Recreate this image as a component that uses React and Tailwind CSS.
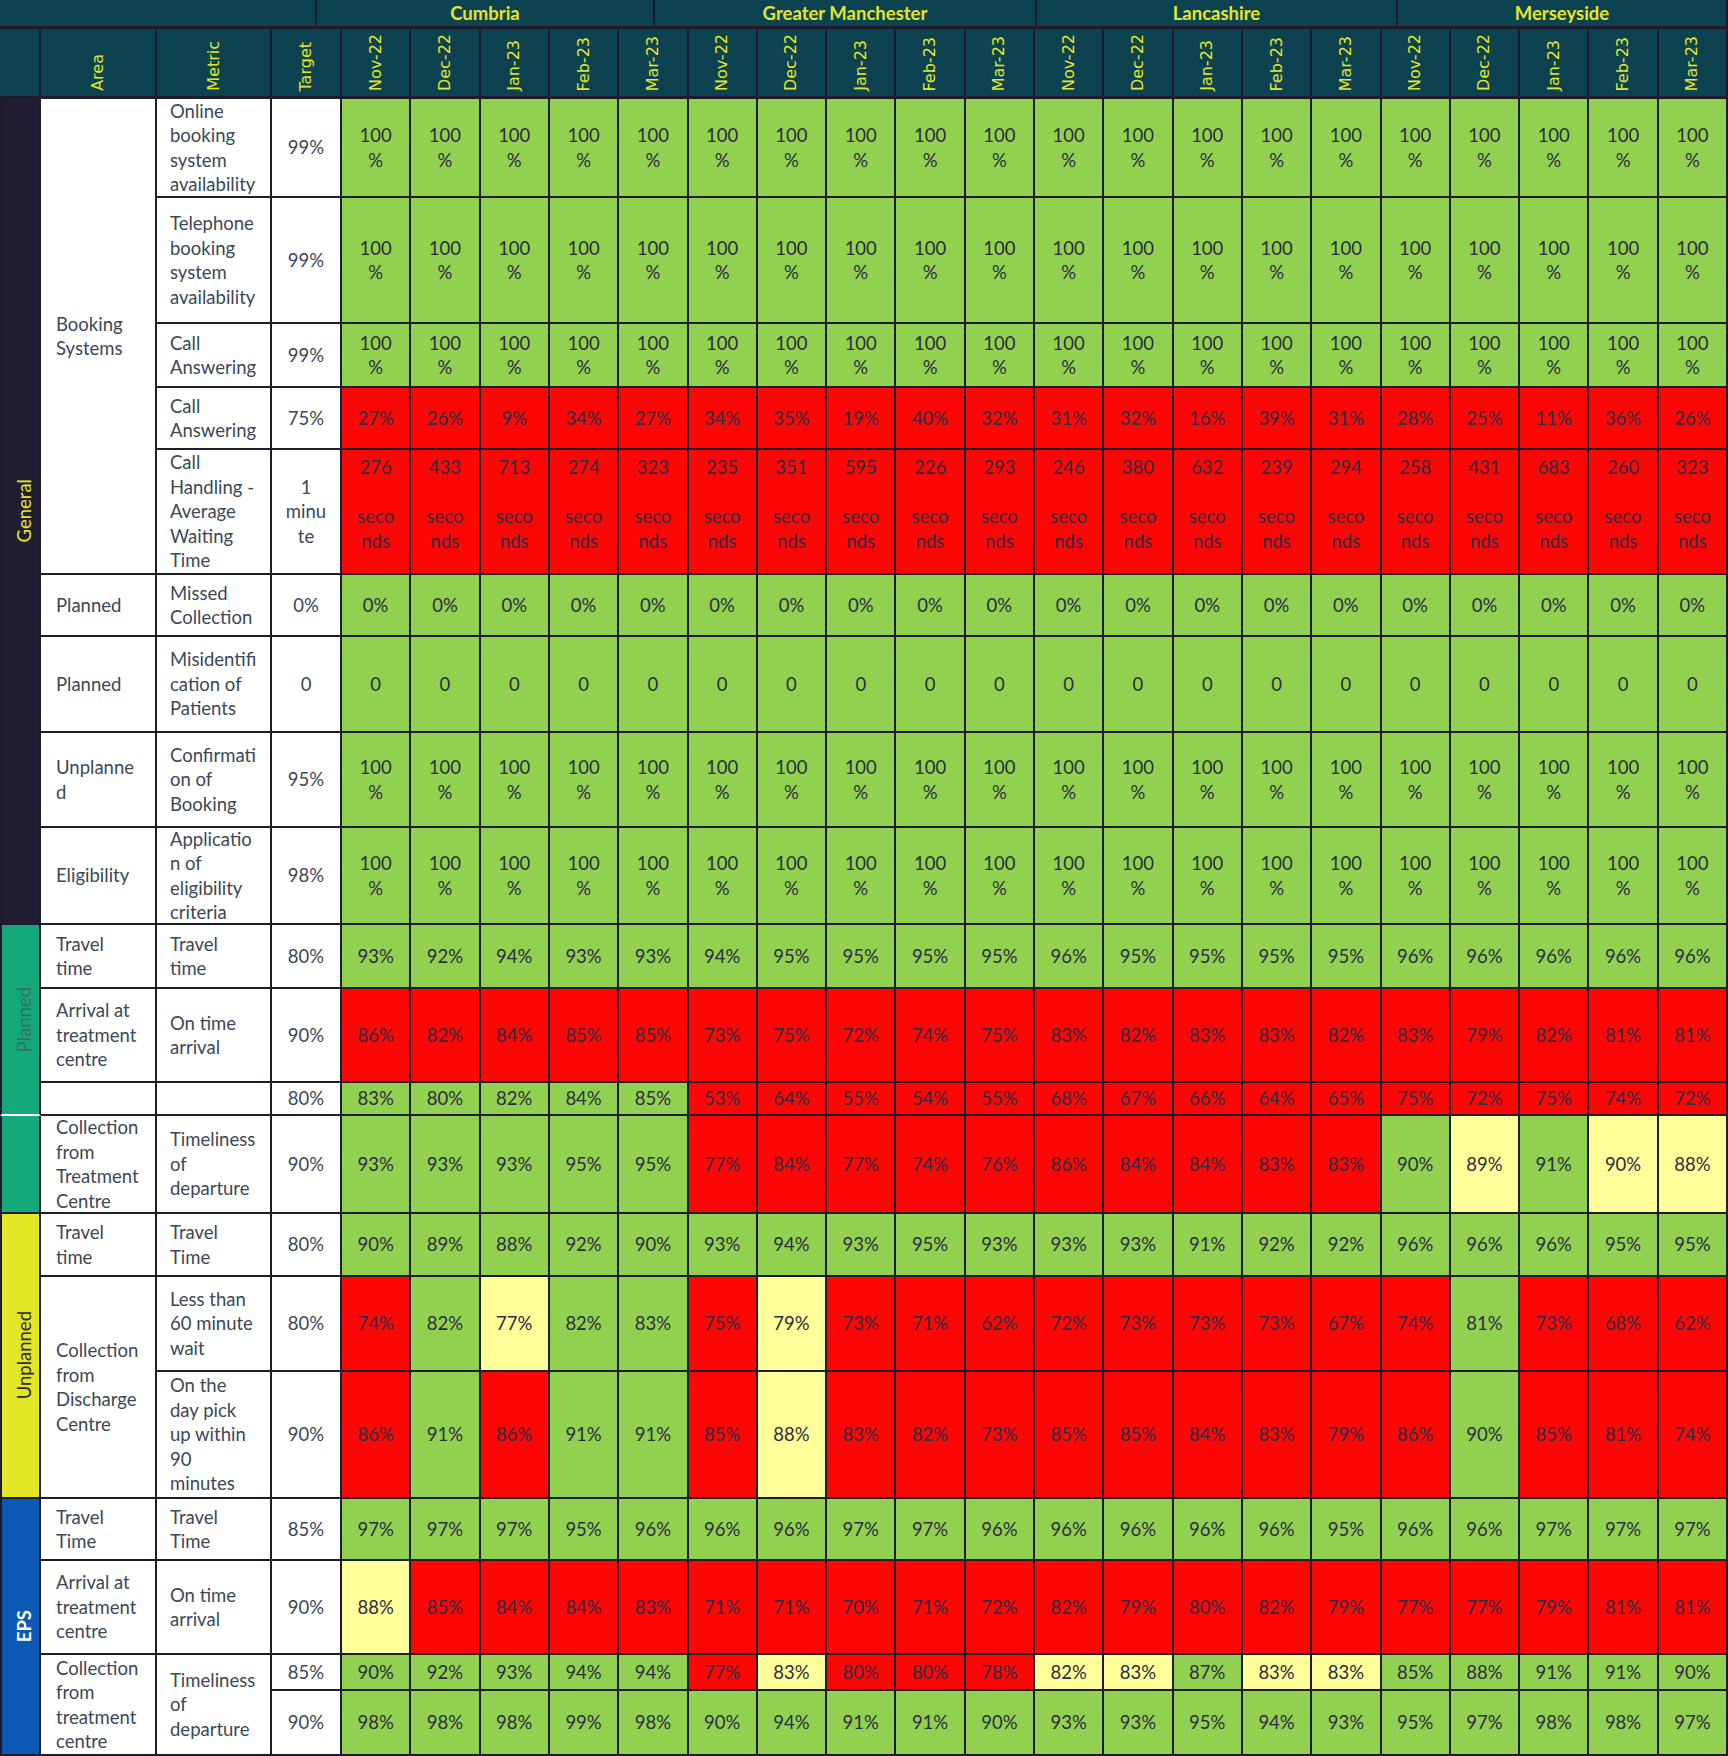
import React from 'react';

const LINE = 'border-[#1d1c2c]';
const fills = { g: 'bg-[#92d050]', r: 'bg-[#fd0606]', y: 'bg-[#ffff99]' };
const spans = { 1: '', 2: 'row-span-2', 3: 'row-span-3', 4: 'row-span-4', 5: 'row-span-5', 9: 'row-span-9' };

const regions = [
  { name: '', w: 'w-[317px]' },
  { name: 'Cumbria', w: 'w-[338px]' },
  { name: 'Greater Manchester', w: 'w-[382px]' },
  { name: 'Lancashire', w: 'w-[361px]' },
  { name: 'Merseyside', w: 'flex-1' },
];

const months = ['Nov-22', 'Dec-22', 'Jan-23', 'Feb-23', 'Mar-23'];

// helpers for the value rows
const pct = (s) => s.split(' ').map((n) => [n + '%']);
const secs = (s) => s.split(' ').map((n) => [n, '', 'seco', 'nds']);
const all = (lines) => Array(20).fill(lines);
const same = (c) => c.repeat(20);

const rows = [
  {
    band: { label: 'General', span: 9, cls: 'bg-[#211d33] text-[#e6e62a]' },
    area: { lines: ['Booking', 'Systems'], span: 5 },
    metric: { lines: ['Online', 'booking', 'system', 'availability'] },
    target: ['99%'], vals: all(['100', '%']), fill: same('g'),
  },
  { metric: { lines: ['Telephone', 'booking', 'system', 'availability'] }, target: ['99%'], vals: all(['100', '%']), fill: same('g') },
  { metric: { lines: ['Call', 'Answering'] }, target: ['99%'], vals: all(['100', '%']), fill: same('g') },
  {
    metric: { lines: ['Call', 'Answering'] }, target: ['75%'],
    vals: pct('27 26 9 34 27 34 35 19 40 32 31 32 16 39 31 28 25 11 36 26'), fill: same('r'),
  },
  {
    metric: { lines: ['Call', 'Handling -', 'Average', 'Waiting', 'Time'] }, target: ['1', 'minu', 'te'],
    vals: secs('276 433 713 274 323 235 351 595 226 293 246 380 632 239 294 258 431 683 260 323'), fill: same('r'), top: true,
  },
  { area: { lines: ['Planned'] }, metric: { lines: ['Missed', 'Collection'] }, target: ['0%'], vals: all(['0%']), fill: same('g') },
  { area: { lines: ['Planned'] }, metric: { lines: ['Misidentifi', 'cation of', 'Patients'] }, target: ['0'], vals: all(['0']), fill: same('g') },
  { area: { lines: ['Unplanne', 'd'] }, metric: { lines: ['Confirmati', 'on of', 'Booking'] }, target: ['95%'], vals: all(['100', '%']), fill: same('g') },
  { area: { lines: ['Eligibility'] }, metric: { lines: ['Applicatio', 'n of', 'eligibility', 'criteria'] }, target: ['98%'], vals: all(['100', '%']), fill: same('g') },
  {
    band: { label: 'Planned', span: 3, cls: 'bg-[#14a97b] text-[#3f6a64] border-b border-b-white' },
    area: { lines: ['Travel', 'time'] }, metric: { lines: ['Travel', 'time'] }, target: ['80%'],
    vals: pct('93 92 94 93 93 94 95 95 95 95 96 95 95 95 95 96 96 96 96 96'), fill: same('g'),
  },
  {
    area: { lines: ['Arrival at', 'treatment', 'centre'] }, metric: { lines: ['On time', 'arrival'] }, target: ['90%'],
    vals: pct('86 82 84 85 85 73 75 72 74 75 83 82 83 83 82 83 79 82 81 81'), fill: same('r'),
  },
  {
    area: { lines: [''] }, metric: { lines: [''] }, target: ['80%'],
    vals: pct('83 80 82 84 85 53 64 55 54 55 68 67 66 64 65 75 72 75 74 72'), fill: 'ggggg' + 'rrrrr' + 'rrrrr' + 'rrrrr',
  },
  {
    band: { label: '', span: 1, cls: 'bg-[#14a97b]' },
    area: { lines: ['Collection', 'from', 'Treatment', 'Centre'] }, metric: { lines: ['Timeliness', 'of', 'departure'] }, target: ['90%'],
    vals: pct('93 93 93 95 95 77 84 77 74 76 86 84 84 83 83 90 89 91 90 88'), fill: 'ggggg' + 'rrrrr' + 'rrrrr' + 'gygyy',
  },
  {
    band: { label: 'Unplanned', span: 3, cls: 'bg-[#e3e625] text-[#2b2a3c]' },
    area: { lines: ['Travel', 'time'] }, metric: { lines: ['Travel', 'Time'] }, target: ['80%'],
    vals: pct('90 89 88 92 90 93 94 93 95 93 93 93 91 92 92 96 96 96 95 95'), fill: same('g'),
  },
  {
    area: { lines: ['Collection', 'from', 'Discharge', 'Centre'], span: 2 }, metric: { lines: ['Less than', '60 minute', 'wait'] }, target: ['80%'],
    vals: pct('74 82 77 82 83 75 79 73 71 62 72 73 73 73 67 74 81 73 68 62'), fill: 'rgygg' + 'ryrrr' + 'rrrrr' + 'rgrrr',
  },
  {
    metric: { lines: ['On the', 'day pick', 'up within', '90', 'minutes'] }, target: ['90%'],
    vals: pct('86 91 86 91 91 85 88 83 82 73 85 85 84 83 79 86 90 85 81 74'), fill: 'rgrgg' + 'ryrrr' + 'rrrrr' + 'rgrrr',
  },
  {
    band: { label: 'EPS', span: 4, cls: 'bg-[#0b58b5] text-white font-bold' },
    area: { lines: ['Travel', 'Time'] }, metric: { lines: ['Travel', 'Time'] }, target: ['85%'],
    vals: pct('97 97 97 95 96 96 96 97 97 96 96 96 96 96 95 96 96 97 97 97'), fill: same('g'),
  },
  {
    area: { lines: ['Arrival at', 'treatment', 'centre'] }, metric: { lines: ['On time', 'arrival'] }, target: ['90%'],
    vals: pct('88 85 84 84 83 71 71 70 71 72 82 79 80 82 79 77 77 79 81 81'), fill: 'yrrrr' + 'rrrrr' + 'rrrrr' + 'rrrrr',
  },
  {
    area: { lines: ['Collection', 'from', 'treatment', 'centre'], span: 2 }, metric: { lines: ['Timeliness', 'of', 'departure'], span: 2 }, target: ['85%'],
    vals: pct('90 92 93 94 94 77 83 80 80 78 82 83 87 83 83 85 88 91 91 90'), fill: 'ggggg' + 'ryrrr' + 'yygyy' + 'ggggg',
  },
  { target: ['90%'], vals: pct('98 98 98 99 98 90 94 91 91 90 93 93 95 94 93 95 97 98 98 97'), fill: same('g') },
];

const Cell = ({ lines, className = '', top = false }) => (
  <div className={`flex flex-col border-r-2 border-b-2 ${LINE} ${top ? 'justify-start pt-[5px]' : 'justify-center'} ${className}`}>
    {lines.map((l, i) => (
      <div key={i} className="h-[24.5px] leading-[24.5px] whitespace-nowrap">
        {l || '\u00a0'}
      </div>
    ))}
  </div>
);

const HeadLabel = ({ text, className = '' }) => (
  <div className={`flex items-end justify-center pb-[5px] border-r-2 border-b-[3px] ${LINE} ${className}`}>
    <span className="[writing-mode:vertical-rl] rotate-180 whitespace-nowrap leading-[18px]">{text}</span>
  </div>
);

export default function App() {
  return (
    <div className="w-[1728px] h-[1756px] overflow-hidden bg-white font-['Lato',sans-serif] text-[18.5px]">
      {/* region header */}
      <div className={`flex h-[29px] bg-[#0d4350] border-b-[3px] ${LINE}`}>
        {regions.map((r, i) => (
          <div
            key={i}
            className={`${r.w} flex items-center justify-center border-r-2 ${LINE} font-bold text-[18.5px] text-[#e6e62a] leading-none`}
          >
            {r.name}
          </div>
        ))}
      </div>

      <div className="grid grid-cols-[41px_116px_115px_70px_repeat(20,minmax(0,1fr))] grid-rows-[70px_99px_126px_64px_62px_125px_62px_96px_95px_97px_64px_94px_33px_98px_63px_95px_127px_62px_94px_36px_65px]">
        {/* column header */}
        <div className={`bg-[#0d4350] border-r-2 border-b-[3px] ${LINE}`} />
        {['Area', 'Metric', 'Target'].map((t) => (
          <HeadLabel key={t} text={t} className="bg-[#0d4350] text-[#e6e62a] font-['DejaVu_Sans',sans-serif] text-[16px]" />
        ))}
        {[0, 1, 2, 3].flatMap((g) =>
          months.map((m) => (
            <HeadLabel key={g + m} text={m} className="bg-[#0d4350] text-[#e6e62a] font-['DejaVu_Sans',sans-serif] text-[16px]" />
          ))
        )}

        {rows.flatMap((row, ri) => {
          const out = [];
          if (row.band) {
            out.push(
              <div
                key={`b${ri}`}
                className={`${spans[row.band.span]} flex items-center justify-center pl-[6px] border-l-2 border-r-2 border-b-2 ${LINE} ${row.band.cls}`}
              >
                {row.band.label && (
                  <span className="[writing-mode:vertical-rl] rotate-180 whitespace-nowrap leading-[22px]">{row.band.label}</span>
                )}
              </div>
            );
          }
          if (row.area) {
            out.push(
              <Cell key={`a${ri}`} lines={row.area.lines} className={`${spans[row.area.span || 1]} pl-[15px] text-[#3b4856]`} />
            );
          }
          if (row.metric) {
            out.push(
              <Cell key={`m${ri}`} lines={row.metric.lines} className={`${spans[row.metric.span || 1]} pl-[13px] text-[#3b4856]`} />
            );
          }
          out.push(<Cell key={`t${ri}`} lines={row.target} className="items-center text-[#3b4856]" />);
          row.vals.forEach((v, vi) => {
            out.push(
              <Cell
                key={`v${ri}-${vi}`}
                lines={v}
                top={row.top}
                className={`items-center text-[#2d2b40] ${fills[row.fill[vi]]}`}
              />
            );
          });
          return out;
        })}
      </div>
    </div>
  );
}
